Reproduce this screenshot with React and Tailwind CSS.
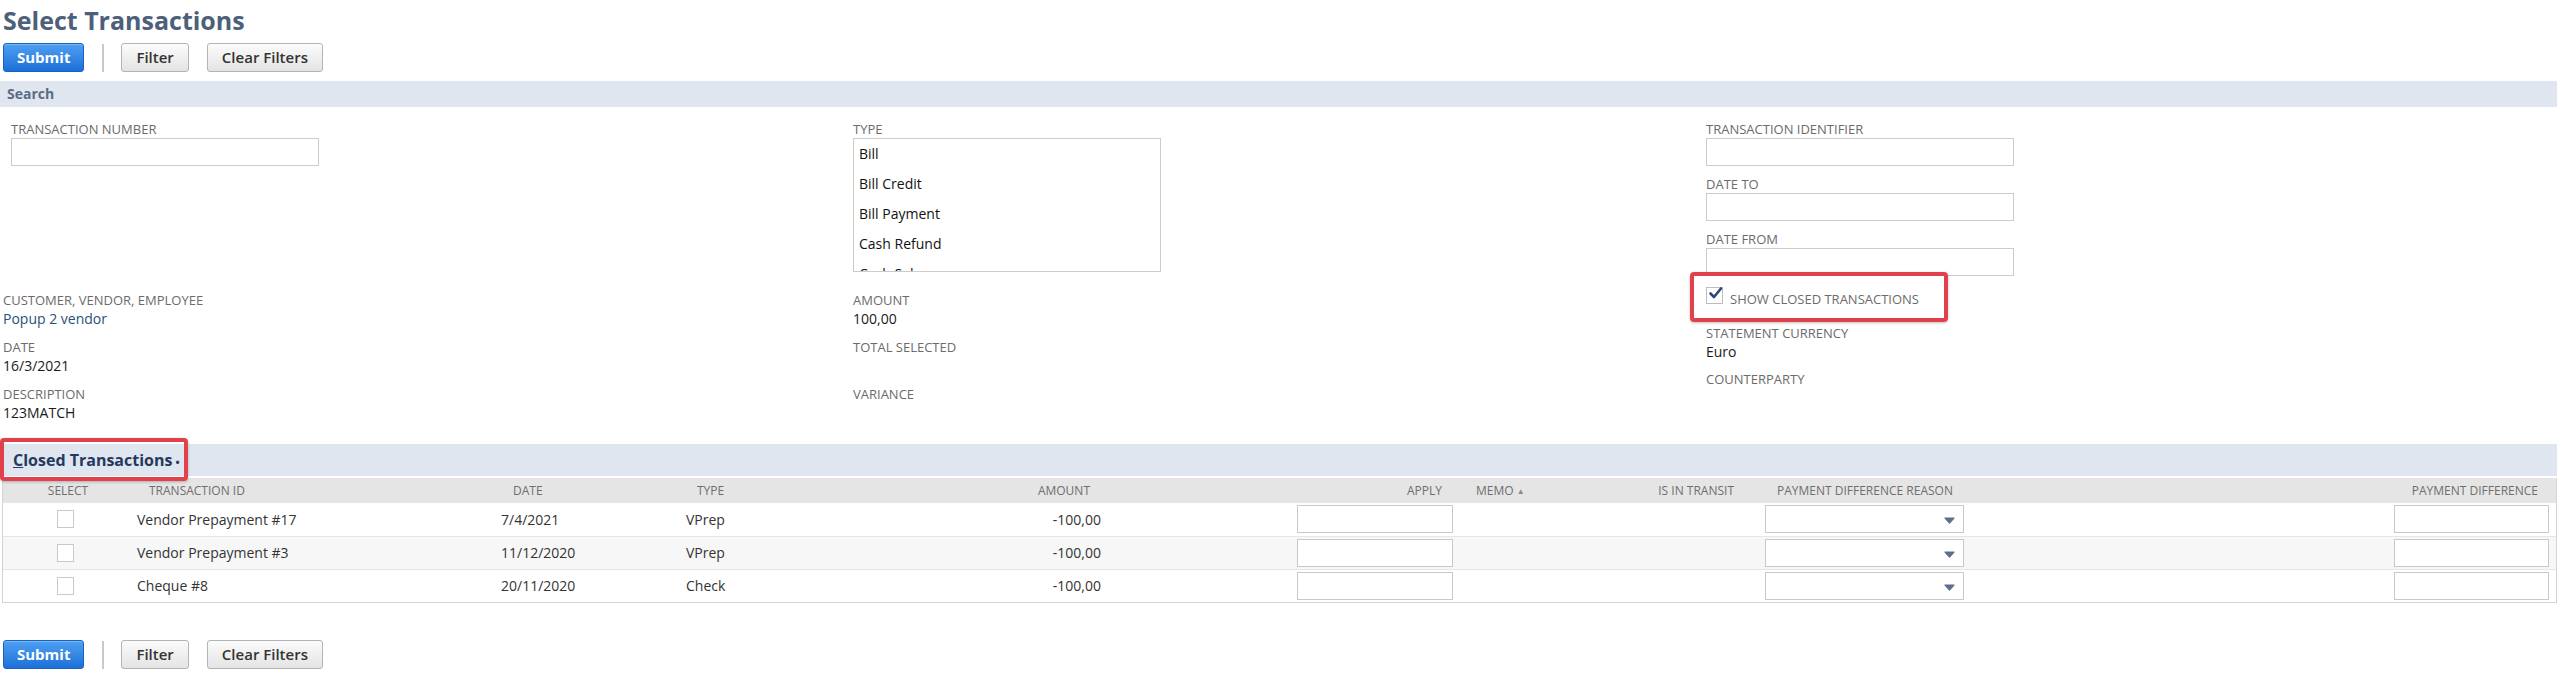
import React from 'react';

const PrimaryButton = ({ children }) => (
    <button className="h-[29px] px-[13px] rounded-[3px] border border-[#1763c2] bg-linear-to-b from-[#4ea0f2] to-[#1c6fd8] text-white text-[15px] font-bold leading-none shadow-[inset_0_1px_0_rgba(255,255,255,0.25)]">
        {children}
    </button>
);

const GrayButton = ({ children }) => (
    <button className="h-[29px] px-[14px] rounded-[3px] border border-[#b3b3b3] bg-linear-to-b from-[#fbfbfb] to-[#e4e4e4] text-[#333] text-[15px] font-semibold leading-none">
        {children}
    </button>
);

const ButtonBar = () => (
    <div className="flex items-center h-[29px] pl-[3px]">
        <PrimaryButton>Submit</PrimaryButton>
        <div className="ml-[18px] w-[2px] h-[28px] bg-[#c9c9c9]" />
        <div className="ml-[17px]">
            <GrayButton>Filter</GrayButton>
        </div>
        <div className="ml-[18px]">
            <GrayButton>Clear Filters</GrayButton>
        </div>
    </div>
);

const Label = ({ children, className = '' }) => (
    <div className={`text-[13px] uppercase text-[#6b6b6b] ${className}`}>{children}</div>
);

const TextInput = ({ className = '' }) => (
    <div className={`h-[28px] w-[308px] border border-[#cccccc] bg-white ${className}`} />
);

const Field = ({ label, value, link }) => (
    <div className="mb-[10px]">
        <Label className="h-[18px] leading-[18px]">{label}</Label>
        <div className={`h-[19px] leading-[19px] text-[14px] ${link ? 'text-[#2b4f78]' : 'text-[#1a1a1a]'}`}>
            {value}
        </div>
    </div>
);

const types = ['Bill', 'Bill Credit', 'Bill Payment', 'Cash Refund', 'Cash Sale'];

const rows = [
    { id: 'Vendor Prepayment #17', date: '7/4/2021', type: 'VPrep', amount: '-100,00' },
    { id: 'Vendor Prepayment #3', date: '11/12/2020', type: 'VPrep', amount: '-100,00' },
    { id: 'Cheque #8', date: '20/11/2020', type: 'Check', amount: '-100,00' },
];

const Caret = () => (
    <svg width="11" height="7" viewBox="0 0 11 7" className="absolute right-[8px] top-[11px]">
        <path d="M1 1 H10 L5.5 6 Z" fill="#5d6f8b" stroke="#5d6f8b" strokeWidth="1.2" strokeLinejoin="round" />
    </svg>
);

const App = () => {
    return (
        <div className="w-full h-[679px] overflow-hidden bg-white font-['Open_Sans',sans-serif] text-[#1a1a1a]">
            <h1 className="pl-[3px] pt-[4px] h-[36px] text-[25px] leading-[32px] font-bold text-[#4d5f79]">
                Select Transactions
            </h1>

            <div className="mt-[7px]">
                <ButtonBar />
            </div>

            <div className="mt-[9px] mr-[3px] h-[26px] bg-[#e0e6ef] pl-[7px] text-[14px] leading-[26px] font-bold text-[#5a6b86]">
                Search
            </div>

            {/* filter fields */}
            <div className="grid grid-cols-[850px_853px_1fr] pl-[3px] pt-[14px] h-[337px]">
                <div>
                    <div className="pl-[8px]">
                        <Label className="h-[17px] leading-[17px]">Transaction Number</Label>
                        <TextInput />
                    </div>
                    <div className="mt-[125px]">
                        <Field label="Customer, Vendor, Employee" value="Popup 2 vendor" link />
                        <Field label="Date" value="16/3/2021" />
                        <Field label="Description" value="123MATCH" />
                    </div>
                </div>

                <div>
                    <Label className="h-[17px] leading-[17px]">Type</Label>
                    <div className="h-[134px] w-[308px] border border-[#cccccc] overflow-hidden bg-white">
                        {types.map((t) => (
                            <div key={t} className="pl-[5px] text-[14px] leading-[30px] text-[#111]">
                                {t}
                            </div>
                        ))}
                    </div>
                    <div className="mt-[19px]">
                        <Field label="Amount" value="100,00" />
                        <Field label="Total Selected" value="" />
                        <Field label="Variance" value="" />
                    </div>
                </div>

                <div>
                    <Label className="h-[17px] leading-[17px]">Transaction Identifier</Label>
                    <TextInput />
                    <Label className="mt-[10px] h-[17px] leading-[17px]">Date To</Label>
                    <TextInput />
                    <Label className="mt-[10px] h-[17px] leading-[17px]">Date From</Label>
                    <TextInput />

                    <div className="relative mt-[11px] flex items-start h-[22px]">
                        <div className="relative w-[17px] h-[17px] border border-[#bdbdbd] bg-white">
                            <svg width="16" height="14" viewBox="0 0 16 14" className="absolute left-[1px] -top-[2px]">
                                <path d="M2.5 7.5 L6 11 L13 2.5" fill="none" stroke="#2c4675" strokeWidth="2.6" strokeLinecap="round" strokeLinejoin="round" />
                            </svg>
                        </div>
                        <Label className="ml-[7px] mt-[3px] leading-[19px]">Show Closed Transactions</Label>
                        <div className="absolute -left-[16px] -top-[15px] w-[258px] h-[50px] border-[4px] border-[#e0414b] rounded-[4px] shadow-[0_1px_3px_rgba(0,0,0,0.25)]" />
                    </div>

                    <div className="mt-[15px]">
                        <div className="mb-[9px]">
                            <Label className="h-[18px] leading-[18px]">Statement Currency</Label>
                            <div className="h-[19px] leading-[19px] text-[14px]">Euro</div>
                        </div>
                        <Label className="h-[18px] leading-[18px]">Counterparty</Label>
                    </div>
                </div>
            </div>

            {/* subtab */}
            <div className="relative mr-[3px] h-[32px] bg-[#e0e6ef] pl-[13px] text-[16px] leading-[32px] font-bold text-[#25395e]">
                <span><span className="underline">C</span>losed Transactions</span>
                <span className="ml-[3px] text-[11px] align-middle">•</span>
                <div className="absolute left-0 -top-[6px] w-[188px] h-[43px] border-[4px] border-[#e0414b] rounded-[4px] shadow-[0_1px_3px_rgba(0,0,0,0.25)]" />
            </div>

            <div className="mt-[2px] ml-[2px] mr-[3px] border-l border-r border-b border-[#d4d4d4]">
                <table className="w-full table-fixed border-collapse">
                    <colgroup>
                        <col className="w-[124px]" />
                        <col className="w-[364px]" />
                        <col className="w-[185px]" />
                        <col className="w-[224px]" />
                        <col className="w-[211px]" />
                        <col className="w-[352px]" />
                        <col className="w-[177px]" />
                        <col className="w-[115px]" />
                        <col className="w-[219px]" />
                        <col />
                    </colgroup>
                    <thead>
                        <tr className="h-[25px] bg-[#e5e5e5] text-[12px] uppercase text-[#6e6e6e] font-normal">
                            <th className="font-normal text-center pl-[6px]">Select</th>
                            <th className="font-normal text-left pl-[22px]">Transaction ID</th>
                            <th className="font-normal text-left pl-[22px]">Date</th>
                            <th className="font-normal text-left pl-[21px]">Type</th>
                            <th className="font-normal text-right pr-[21px]">Amount</th>
                            <th className="font-normal text-right pr-[21px]">Apply</th>
                            <th className="font-normal text-left pl-[13px]">
                                Memo <span className="text-[8px] align-[1px] text-[#8a8a8a]">▲</span>
                            </th>
                            <th className="font-normal text-right pr-[21px] whitespace-nowrap">Is in Transit</th>
                            <th className="font-normal text-left pl-[22px] whitespace-nowrap">Payment Difference Reason</th>
                            <th className="font-normal text-right pr-[18px]">Payment Difference</th>
                        </tr>
                    </thead>
                    <tbody>
                        {rows.map((r, i) => (
                            <tr
                                key={r.id}
                                className={`h-[33px] text-[14px] text-[#333] border-b border-[#e6e6e6] last:border-b-0 ${i === 1 ? 'bg-[#f7f7f7]' : 'bg-white'}`}
                            >
                                <td className="p-0">
                                    <div className="mx-auto w-[17px] h-[18px] border border-[#c9c9c9] bg-white" />
                                </td>
                                <td className="pl-[10px]">{r.id}</td>
                                <td className="pl-[10px]">{r.date}</td>
                                <td className="pl-[10px]">{r.type}</td>
                                <td className="pr-[10px] text-right">{r.amount}</td>
                                <td className="pr-[10px]">
                                    <div className="ml-auto w-[156px] h-[28px] border border-[#c9c9c9] bg-white" />
                                </td>
                                <td />
                                <td />
                                <td className="pl-[10px]">
                                    <div className="relative w-[199px] h-[28px] border border-[#c9c9c9] bg-white">
                                        <Caret />
                                    </div>
                                </td>
                                <td className="pr-[7px]">
                                    <div className="ml-auto w-[155px] h-[28px] border border-[#c9c9c9] bg-white" />
                                </td>
                            </tr>
                        ))}
                    </tbody>
                </table>
            </div>

            <div className="mt-[37px]">
                <ButtonBar />
            </div>
        </div>
    );
};

export default App;
